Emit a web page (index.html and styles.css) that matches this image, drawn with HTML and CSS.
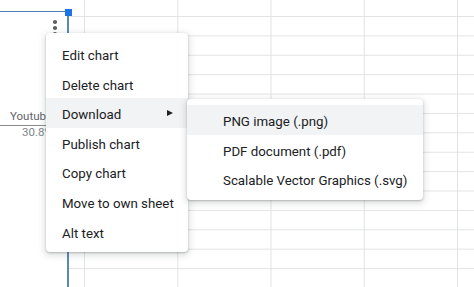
FILE: index.html
```html
<!DOCTYPE html>
<html>
<head>
<meta charset="utf-8">
<link rel="stylesheet" href="styles.css">
</head>
<body>
<div class="sheet">
  <div class="chart">
    <div class="kebab"><span></span><span></span><span></span></div>
    <div class="legend">
      <div class="legend-name">Youtube</div>
      <div class="legend-value">30.8%</div>
    </div>
  </div>
  <div class="handle"></div>

  <div class="menu main-menu">
    <div class="item">Edit chart</div>
    <div class="item">Delete chart</div>
    <div class="item active">Download<span class="arrow"></span></div>
    <div class="item">Publish chart</div>
    <div class="item">Copy chart</div>
    <div class="item">Move to own sheet</div>
    <div class="item">Alt text</div>
  </div>

  <div class="menu sub-menu">
    <div class="item active">PNG image (.png)</div>
    <div class="item">PDF document (.pdf)</div>
    <div class="item">Scalable Vector Graphics (.svg)</div>
  </div>
</div>
</body>
</html>
```

FILE: styles.css
```css
* { box-sizing: border-box; }
html, body {
  margin: 0;
  padding: 0;
  background: #fff;
}
body {
  font-family: Roboto, "Liberation Sans", Arial, sans-serif;
  color: #202124;
}
.sheet {
  position: relative;
  width: 474px;
  height: 287px;
  overflow: hidden;
  background-color: #fff;
  background-image:
    linear-gradient(to right, #e2e3e3 1px, transparent 1px),
    linear-gradient(to bottom, #e2e3e3 1px, transparent 1px);
  background-size: 93.25px 100%, 100% 19.4px;
  background-position: 84px 0, 0 16px;
}
.chart {
  position: absolute;
  left: -2px;
  top: 11px;
  width: 71px;
  height: 290px;
  background: #fff;
  border-top: 1px solid #4f7fb8;
  border-right: 2px solid #5b88b8;
}
.handle {
  position: absolute;
  left: 65px;
  top: 9px;
  width: 7px;
  height: 7px;
  background: #1a73e8;
}
.kebab {
  position: absolute;
  left: 55px;
  top: 8px;
  display: flex;
  flex-direction: column;
  gap: 2.5px;
}
.kebab span {
  display: block;
  width: 3.5px;
  height: 3.5px;
  border-radius: 50%;
  background: #5f6368;
}
.legend {
  position: absolute;
  left: 2px;
  top: 98px;
  width: 60px;
  font-size: 11.5px;
  line-height: 13px;
}
.legend-name {
  color: #5f6368;
  padding-left: 10px;
  padding-bottom: 2px;
  border-bottom: 1px solid #8a8a8a;
}
.legend-value {
  color: #80868b;
  padding-left: 22px;
  padding-top: 0;
}
.menu {
  position: absolute;
  background: #fff;
  border-radius: 4px;
  padding: 6px 0;
  box-shadow: 0 2px 6px 2px rgba(60, 64, 67, 0.15), 0 1px 2px rgba(60, 64, 67, 0.3);
  font-size: 13.3px;
}
.main-menu {
  left: 46px;
  top: 33px;
  width: 142px;
}
.sub-menu {
  left: 187px;
  top: 99px;
  width: 236px;
}
.item {
  position: relative;
  height: 29.6px;
  padding-top: 4px;
  line-height: 25.6px;
  padding-left: 16px;
  white-space: nowrap;
}
.sub-menu .item {
  padding-left: 36px;
}
.item.active {
  background: #f1f3f4;
}
.arrow {
  position: absolute;
  right: 15px;
  top: 12px;
  width: 0;
  height: 0;
  border-top: 3px solid transparent;
  border-bottom: 3px solid transparent;
  border-left: 6px solid #202124;
}
```
